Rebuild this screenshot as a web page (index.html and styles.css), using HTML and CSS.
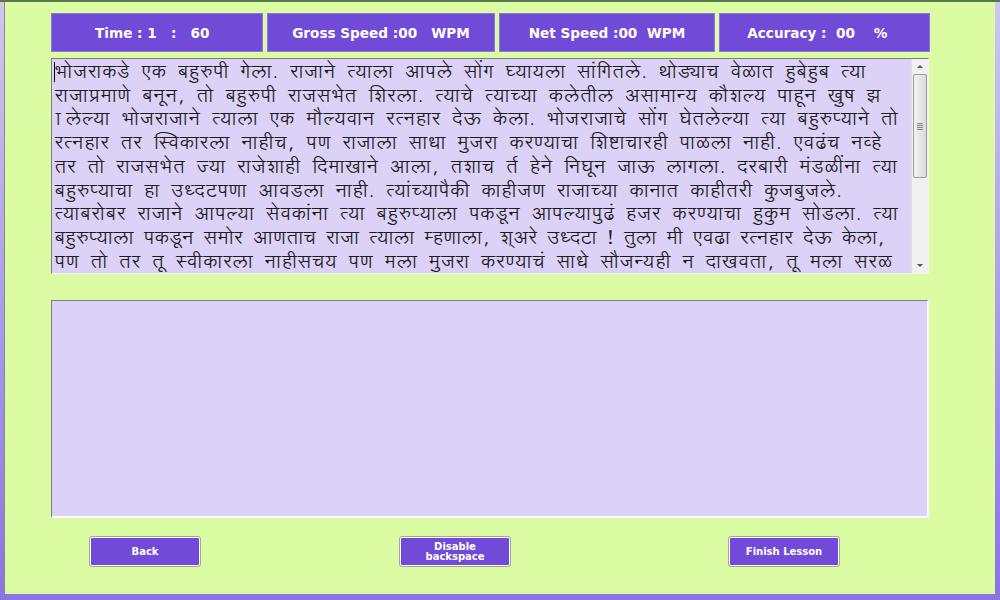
FILE: index.html
```html
<!DOCTYPE html>
<html lang="mr">
<head>
    <meta charset="UTF-8">
    <title>Typing Lesson</title>
    <link rel="stylesheet" href="styles.css">
</head>
<body>
    <div class="window">
        <div class="panel">
            <div class="stats">
                <div class="stat">Time : 1   :   60  </div>
                <div class="stat">Gross Speed :00   WPM</div>
                <div class="stat">Net Speed :00  WPM</div>
                <div class="stat">Accuracy :  00    %   </div>
            </div>
            <div class="passage">
                <span class="caret"></span>
                <div class="passage-text">भोजराकडे एक बहुरुपी गेला. राजाने त्याला आपले सोंग घ्यायला सांगितले. थोड्याच वेळात हुबेहुब त्या<br>राजाप्रमाणे बनून, तो बहुरुपी राजसभेत शिरला. त्याचे त्याच्या कलेतील असामान्य कौशल्य पाहून खुष झ<br><span class="split">&nbsp;ालेल्या</span> भोजराजाने त्याला एक मौल्यवान रत्नहार देऊ केला. भोजराजाचे सोंग घेतलेल्या त्या बहुरुप्याने तो<br>रत्नहार तर स्विकारला नाहीच, पण राजाला साधा मुजरा करण्याचा शिष्टाचारही पाळला नाही. एवढंच नव्हे<br>तर तो राजसभेत ज्या राजेशाही दिमाखाने आला, तशाच र्त  हेने निघून जाऊ लागला. दरबारी मंडळींना त्या<br>बहुरुप्याचा हा उध्दटपणा आवडला नाही. त्यांच्यापैकी काहीजण राजाच्या कानात काहीतरी कुजबुजले.<br>त्याबरोबर राजाने आपल्या सेवकांना त्या बहुरुप्याला पकडून आपल्यापुढं हजर करण्याचा हुकुम सोडला. त्या<br><span class="tight">बहुरुप्याला पकडून समोर आणताच राजा त्याला म्हणाला, श्अरे उध्दटा ! तुला मी एवढा रत्नहार देऊ केला,</span><br>पण तो तर तू स्वीकारला नाहीसचय पण मला मुजरा करण्याचं साधे सौजन्यही न दाखवता, तू मला सरळ<br>झिडकारून निघालास, असे का?</div>
                <div class="scrollbar">
                    <span class="arrow up"></span>
                    <div class="track">
                        <div class="thumb"><span class="grip"></span></div>
                    </div>
                    <span class="arrow down"></span>
                </div>
            </div>
            <div class="typing"></div>
            <div class="actions">
                <button class="button">Back</button>
                <button class="button button-middle">Disable<br>backspace</button>
                <button class="button button-last">Finish Lesson</button>
            </div>
        </div>
    </div>
</body>
</html>
```

FILE: styles.css
```css
body {
    margin: 0;
    background-color: #8b73e3;
    font-family: "DejaVu Sans", Verdana, sans-serif;
}
.window {
    height: 600px;
    border-top: 2px solid #557a4b;
    box-sizing: border-box;
    background: linear-gradient(#cfc6f2, #8b73e3);
}
.panel {
    margin-left: 4px;
    width: 991px;
    height: 592px;
    box-sizing: border-box;
    border-left: 1px solid #8a8a8a;
    background-color: #dcfca3;
    padding: 11px 0 0 46px;
}
.stats {
    display: grid;
    grid-template-columns: 212px 228px 216px 211px;
    gap: 4px;
}
.stat {
    height: 39px;
    padding-top: 1px;
    box-sizing: border-box;
    border: 1px solid #8f74e4;
    background-color: #714bd7;
    color: #fff;
    font-size: 13.6px;
    font-weight: bold;
    line-height: 36px;
    text-align: center;
    white-space: pre;
}
.passage {
    position: relative;
    display: flex;
    width: 878px;
    height: 216px;
    margin-top: 6px;
    box-sizing: border-box;
    border: 1px solid #7c7c7c;
    border-right-color: #f4f4f4;
    border-bottom-color: #f4f4f4;
    background-color: #dcd2f8;
    overflow: hidden;
}
.caret {
    position: absolute;
    left: 2px;
    top: 3px;
    width: 1px;
    height: 20px;
    background-color: #000;
}
.passage-text {
    flex: 1;
    padding: 2px 0 0 3px;
    font-family: "Lohit Devanagari", "Noto Sans Devanagari", sans-serif;
    font-size: 19px;
    letter-spacing: 1.25px;
    word-spacing: 4px;
    line-height: 23.7px;
    color: #1c1c1c;
    white-space: nowrap;
    overflow: hidden;
}
.split {
    margin-left: -5px;
}
.tight {
    letter-spacing: 0.9px;
    word-spacing: 3px;
}
.scrollbar {
    width: 16px;
    display: flex;
    flex-direction: column;
    background-color: #f1f1f1;
    border-left: 1px solid #e2e2e2;
}
.arrow {
    height: 15px;
    position: relative;
}
.arrow::after {
    content: "";
    position: absolute;
    left: 5px;
    top: 6px;
    border-left: 3px solid transparent;
    border-right: 3px solid transparent;
}
.arrow.up::after {
    border-bottom: 3px solid #555;
}
.arrow.down::after {
    border-top: 3px solid #555;
}
.track {
    flex: 1;
}
.thumb {
    height: 104px;
    margin: 0 1px;
    box-sizing: border-box;
    border: 1px solid #9c9c9c;
    border-radius: 2px;
    background: linear-gradient(to right, #f3f3f3, #dadada);
    display: flex;
    align-items: center;
    justify-content: center;
}
.grip {
    width: 6px;
    height: 5px;
    border-top: 1px solid #8a8a8a;
    border-bottom: 1px solid #8a8a8a;
    background: linear-gradient(#dadada 1px, #8a8a8a 1px, #8a8a8a 2px, #dadada 2px, #dadada 3px, #8a8a8a 3px, #8a8a8a 4px, #dadada 4px);
}
.typing {
    width: 878px;
    height: 218px;
    margin-top: 26px;
    box-sizing: border-box;
    border: 1px solid #7c7c7c;
    border-right: 2px solid #fff;
    border-bottom: 2px solid #fff;
    background-color: #dcd2f8;
}
.actions {
    display: flex;
    margin: 19px 0 0 39px;
}
.button {
    width: 110px;
    height: 29px;
    padding: 0;
    box-sizing: border-box;
    border: 1px solid #fff;
    border-radius: 2px;
    outline: 1px solid #a3a3a3;
    background-color: #714bd7;
    color: #fff;
    font-family: "DejaVu Sans", Verdana, sans-serif;
    font-size: 10px;
    font-weight: bold;
    line-height: 10px;
}
.button-middle {
    margin-left: 200px;
}
.button-last {
    margin-left: 219px;
}
```
